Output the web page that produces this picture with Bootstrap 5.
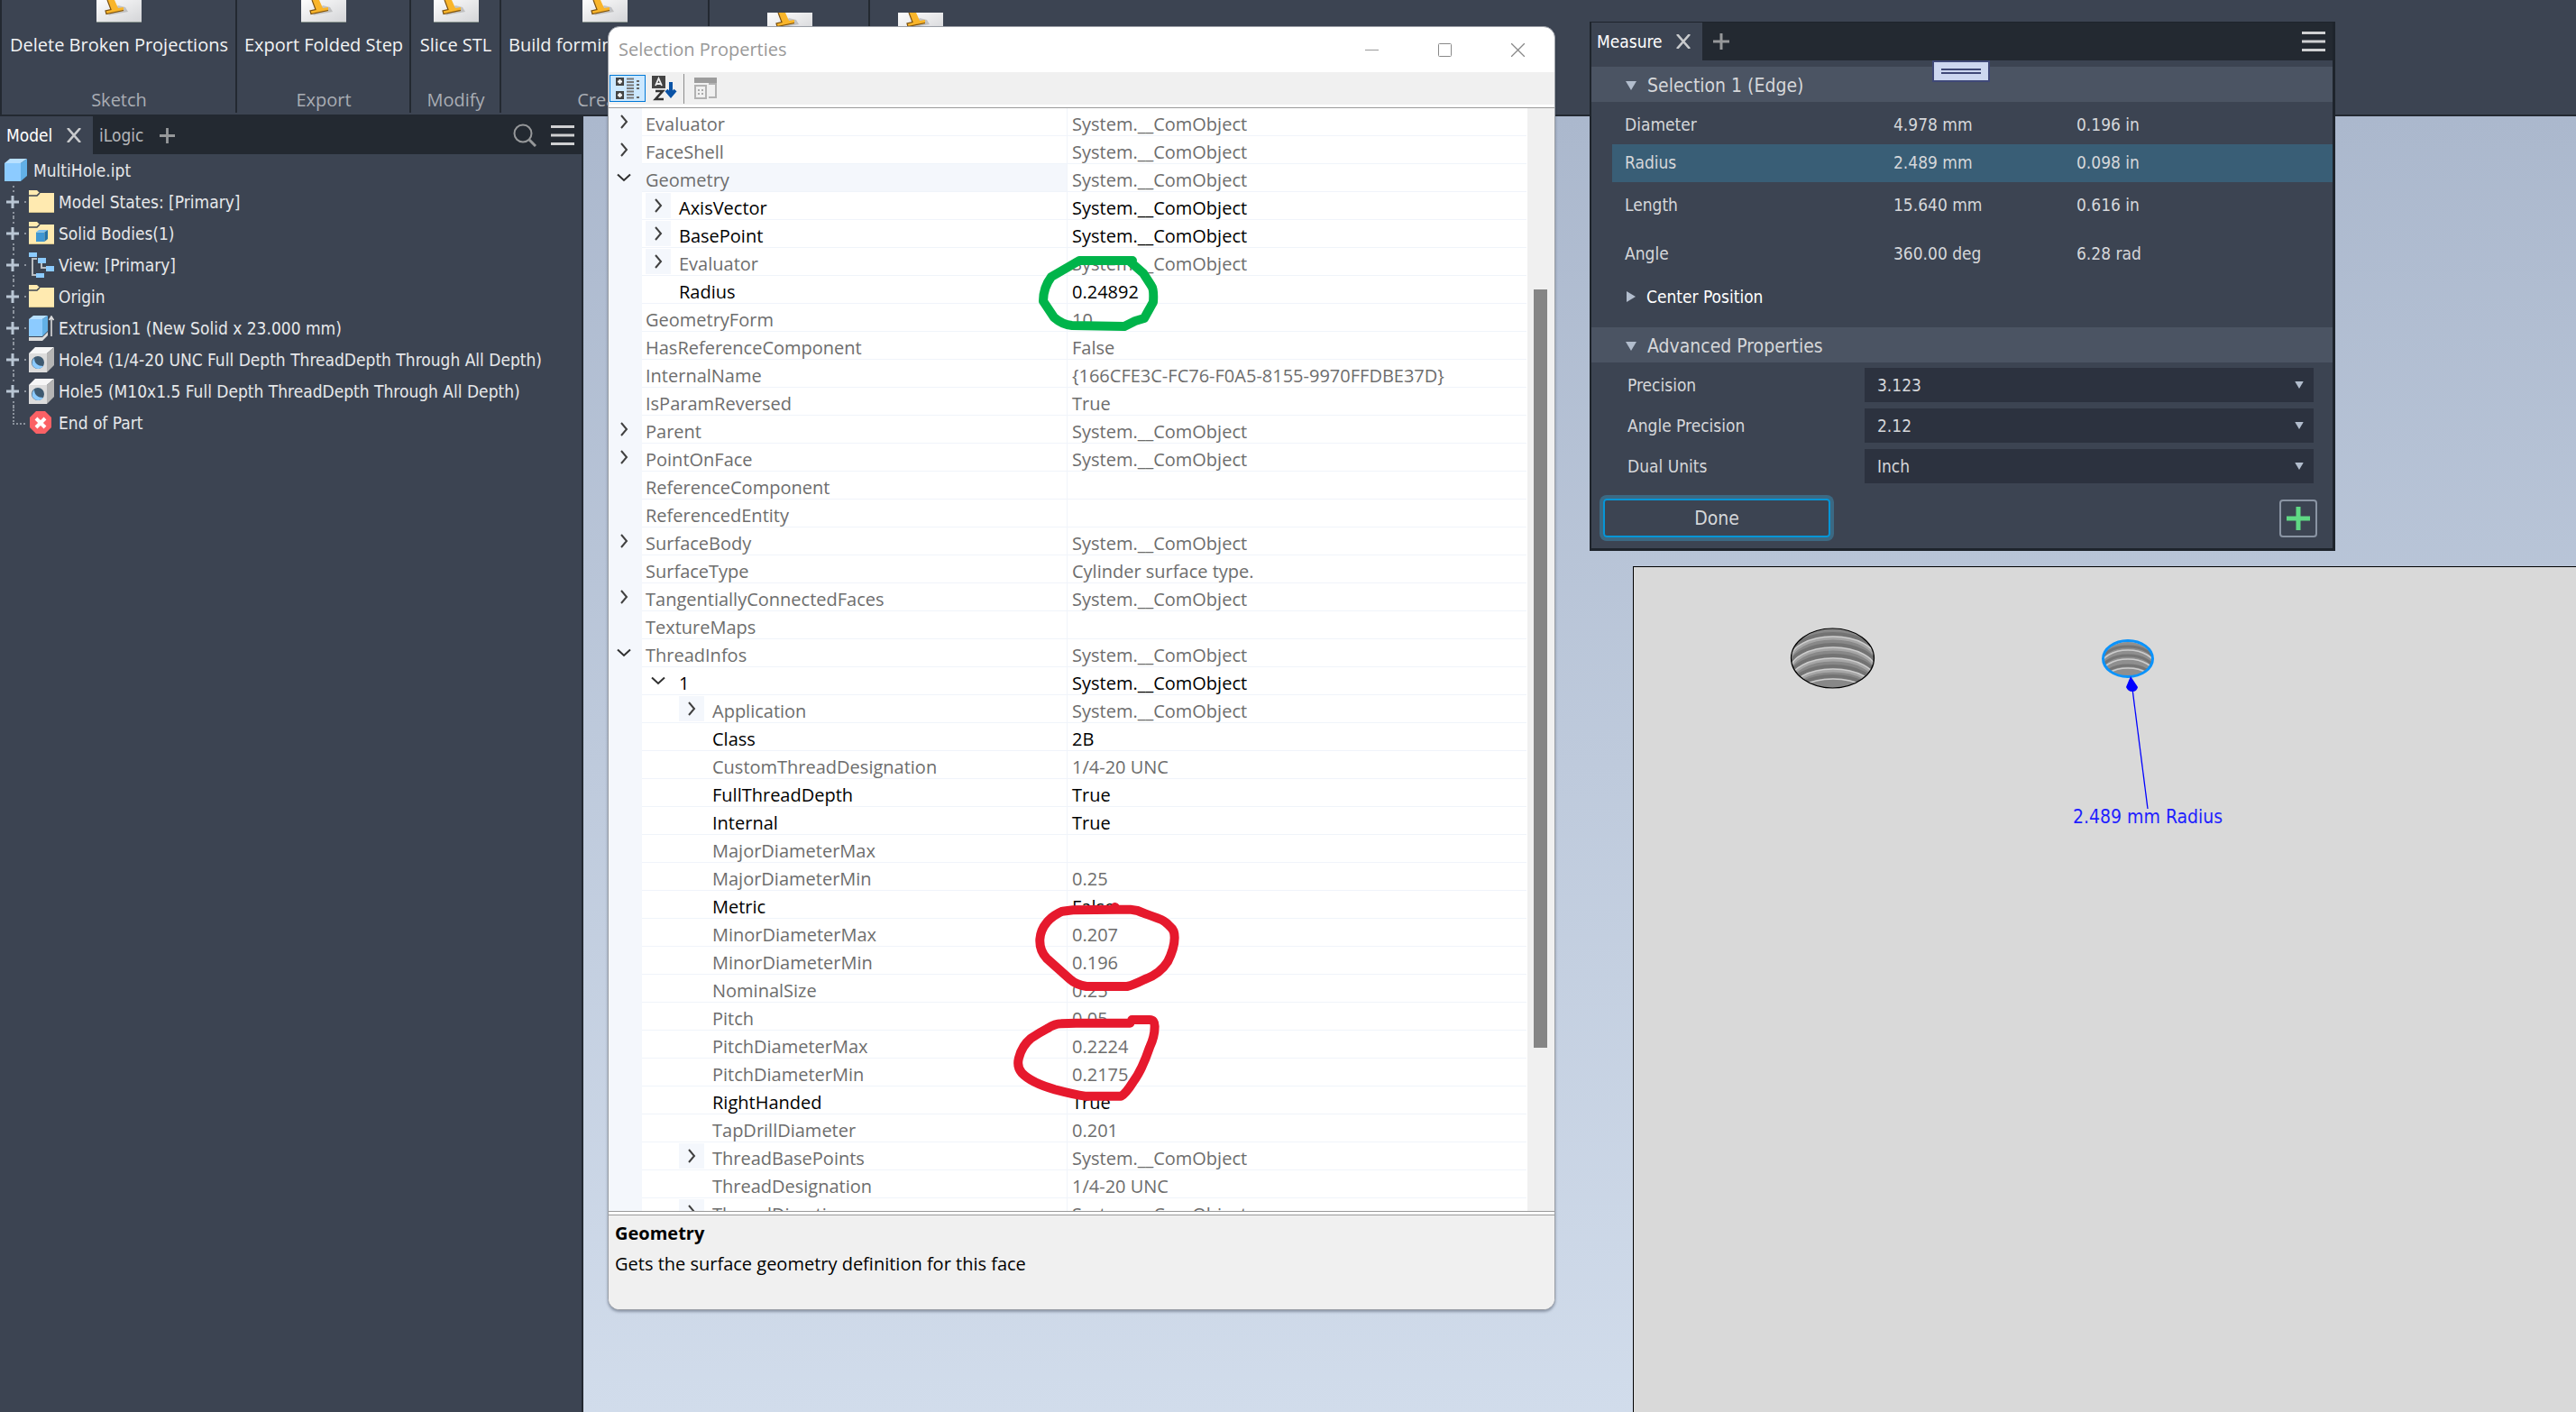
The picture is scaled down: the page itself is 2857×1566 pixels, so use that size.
<!DOCTYPE html>
<html lang="en">
<head>
<meta charset="utf-8">
<meta name="viewport" content="width=device-width, initial-scale=1">
<title>MultiHole.ipt</title>
<link href="https://cdn.jsdelivr.net/npm/bootstrap@5.3.0/dist/css/bootstrap.min.css" rel="stylesheet">
<style>
:root{--panel:#3c4452;--dark:#232931;--head:#4b5463;--ui:"DejaVu Sans Condensed","DejaVu Sans",sans-serif;--segoe:"Open Sans","Noto Sans",sans-serif}
body{font:19px/24px var(--ui);color:#e6e8ea;background:var(--panel)}
button{font:inherit;color:inherit;background:none;border:0;padding:0}
svg{display:block;flex:none}
/* ribbon */
.ribbon{background:var(--panel);height:129px;border-bottom:2px solid var(--dark);border-left:2px solid var(--dark);font:20px/28px var(--segoe);color:#f2f3f4}
.rib-group{border-right:2px solid var(--dark);height:125px;padding:0 7px 0 8px}
.rib-group.w-sketch{width:261px}
.rib-group.w-export{width:193px}
.rib-group.w-modify{width:100px}
.rib-group.wide{width:231px}
.rib-group.mid{width:178px}
.rib-group.last{border:0;width:110px}
.rib-tool{height:64px}
.rib-tool svg{margin-bottom:11px}
.rib-title{color:#a9adb4}
/* browser panel */
.browser{width:647px;background:var(--panel);border-right:2px solid var(--dark)}
.tabbar{background:var(--dark);height:42px}
.tab-on{background:var(--panel);color:#fff;height:42px}
.tab-off{color:#b4b6b9;margin-left:7px;margin-right:18px}
.browser .tab-on{width:103px;padding:0 13px 0 7px}
.tree li{height:35px;position:relative;padding-left:7px}
.tree li.root{padding-left:5px;gap:7px}
.tree li.kid::before{content:"";position:absolute;left:14px;top:0;bottom:0;border-left:2px dotted #8b929c}
.tree li.stop::before{bottom:15px;width:14px;border-bottom:2px dotted #8b929c}
.tree .plus{background:var(--panel);width:15px;padding:4px 0;position:relative}
.tree .dot{width:2px;height:2px;background:#8b929c;margin:0 3px 0 5px}
.tree .ico{width:28px;margin-right:5px}
.tree li.stop .ico{margin-left:25px}
/* canvas */
.canvas{background:linear-gradient(#abb8cd,#d1dceb)}
.plate{position:absolute;left:1164px;top:499px;right:0;bottom:0;background:#d9d9d9;border-left:1px solid #000;border-top:1px solid #000}
.plate svg{position:absolute;left:0;top:0}
.dim{position:absolute;left:487px;top:265px;font-size:21px;color:#1f1fff;white-space:nowrap}
/* properties window */
.props{position:absolute;left:674px;top:29px;width:1051px;height:1424px;background:#fff;border:1px solid #9b9fa6;border-radius:13px;overflow:hidden;font:20px/28px var(--segoe);color:#000;box-shadow:0 2px 3px rgba(40,50,70,.4)}
.props-title{height:50px;color:#999;padding:0 33px 0 11px}
.props-title .wins{gap:66px}
.props-tools{height:36px;background:#f0f0f0;padding-left:1px}
.tool-on{width:40px;height:30px;background:#cce8ff;border:1px solid #0078d7}
.tool-az{margin-left:7px}
.props-tools .rule{width:1px;height:33px;background:#8c8c8c;margin:0 11px 0 7px}
.grid-wrap{margin-top:3px;border-top:1px solid #9a9a9a;border-bottom:1px solid #9a9a9a;flex:1 1 0;min-height:0;overflow:hidden}
.grid-wrap table{border-collapse:separate;border-spacing:0;table-layout:fixed;width:1018px;flex:none;align-self:flex-start}
.c-gut{width:37px}.c-name{width:472px}
.grid-wrap td,.grid-wrap th{height:31px;padding:6px 0 0;border-bottom:1px solid #f0f4fa;white-space:nowrap;font-weight:400;line-height:24px;vertical-align:top;overflow:hidden}
.grid-wrap td.gut{background:#f4f7fc;border-color:#f4f7fc}
.grid-wrap th{border-right:1px solid #f0f4fa;padding-left:4px;color:#6d6d6d}
.grid-wrap td.val{padding-left:5px;color:#6d6d6d}
.grid-wrap tr.rw th,.grid-wrap tr.rw td.val{color:#000}
.grid-wrap tr.cur th{background:#f4f7fc}
.l1 .pad{margin-left:37px}
.l2 .pad{margin-left:74px}
.tg{display:flex;width:28px;height:28px;align-items:center;justify-content:center;margin:-5px 0 -4px}
.gut .tg{margin-left:3px}
.l1 .tg,.l2 .tg{background:#f4f7fc;margin-right:9px}
.l2 .tg{margin-left:37px}
.l1 .tg.open{background:none}
.sbar{background:#f0f0f0;width:30px;padding:201px 8px 0 7px}
.sbar div{background:#858585;height:841px}
.props-help{margin-top:3px;border-top:1px solid #9a9a9a;background:#f0f0f0;height:105px;padding:6px 7px}
.props-help p{margin:6px 0 0}
/* ink */
.ink{position:absolute;fill:none;stroke-linecap:round;stroke-linejoin:round;pointer-events:none}
.ink-a{left:1140px;top:270px}
.ink-b{left:1080px;top:960px}
/* measure window */
.measure{position:absolute;left:1763px;top:24px;width:827px;background:var(--panel);border:2px solid #1e242c;border-width:1px 3px 3px 2px;color:#d5d7da}
.measure .tab-on{width:123px;padding:0 13px 0 6px}
.grip{position:absolute;left:378px;top:42px;width:64px;height:24px;background:#cdd7f0;border:2px solid #3f4877;padding:7px 8px}
.grip span{display:block;height:6px;border:solid #3f4877;border-width:2px 0}
.sect{background:var(--head);height:39px;padding:2px 0 0 38px;font-size:21px;gap:12px}
.sect.first{margin-top:7px}
.meas{margin:3px 0 0 23px;width:799px;table-layout:fixed}
.c-lab{width:312px}.c-mm{width:203px}
.meas th,.meas td{font-weight:400;padding:0;vertical-align:middle}
.meas th{padding-left:14px}
.meas tr.r44{height:44px}.meas tr.hit{height:42px;background:#395e76}.meas tr.r50{height:50px}.meas tr.r58{height:58px}
.meas tr.hit th,.meas tr.hit td{padding-bottom:2px}
.cpos{height:53px;padding:7px 0 22px 38px;gap:11px;color:#fff}
.adv{padding:6px 21px 0 0;gap:7px}
.adv label{width:303px;padding-left:40px}
.adv .form-select{background:#2c323f none;border:0;border-radius:0;height:38px;padding:0 14px;color:#d5d7da;font:inherit}
.adv svg{position:absolute;right:11px;top:15px;pointer-events:none}
.acts{padding:17px 17px 12px 13px}
.done{width:252px;height:43px;border:2px solid #0696d7;border-radius:4px;box-shadow:0 0 0 4px rgba(59,130,165,.6);font-size:21px}
.add{width:42px;height:42px;border:2px solid #8a94a3;border-radius:4px;display:flex;align-items:center;justify-content:center}
</style>
<script src="https://cdn.jsdelivr.net/npm/bootstrap@5.3.0/dist/js/bootstrap.bundle.min.js"></script>
</head>
<body class="vh-100 d-flex flex-column overflow-hidden position-relative">
<svg class="position-absolute" width="0" height="0" aria-hidden="true">
<defs>
<linearGradient id="paper" x1="0" y1="0" x2="1" y2="1"><stop offset="0" stop-color="#fdfdfd"/><stop offset="1" stop-color="#d3d4d7"/></linearGradient>
</defs>
<symbol id="i-rule" viewBox="0 0 50 25"><path fill="url(#paper)" d="M0 0h50v25H0z"/><path d="M0 24.500h50" stroke="#8b9690"/><path d="M13 17l22-4-3-5-8-2z" fill="#777" opacity=".35"/><path d="M12 0h8l4 9 6-1v4L11 15.500 10 12l6-1.500z" fill="#f9b52a"/><path d="M12 0l4 10.500-6 1.500 1 3.500 19-4" fill="none" stroke="#7a5010" stroke-width="1.200"/></symbol>
<symbol id="i-plus" viewBox="0 0 14 14"><path d="M7 0v14M0 7h14" stroke="#b9c6d4" stroke-width="3"/></symbol>
<symbol id="i-add" viewBox="0 0 18 18"><path d="M9 0v18M0 9h18" stroke="#96989a" stroke-width="3"/></symbol>
<symbol id="i-x" viewBox="0 0 16 16"><path d="M1 0l14 16M15 0L1 16" stroke="#c9cbcd" stroke-width="2.600"/></symbol>
<symbol id="i-bars" viewBox="0 0 26 22"><path d="M0 1.500h26M0 11h26M0 20.500h26" stroke="#cfd0d2" stroke-width="3"/></symbol>
<symbol id="i-folder" viewBox="0 0 28 25"><path fill="#ffeab0" d="M0 0h9l3 3h16v22H0z"/><path d="M0 6h9l3-3" fill="none" stroke="#3c4452" stroke-width="1.500"/><path d="M0 24.500h28" stroke="#d5c48d"/></symbol>
<symbol id="i-cube" viewBox="0 0 25 25"><path fill="#8ccbff" d="M0 5h18v20H0z"/><path fill="#b8e0ff" d="M0 5l6-5h19l-7 5z"/><path fill="#62b0e6" d="M18 5l7-5v19l-7 6z"/></symbol>
<symbol id="i-hole" viewBox="0 0 28 28"><path fill="#dcdcdc" d="M0 7h20v21H0z"/><path fill="#f6f6f6" d="M0 7l7-7h21l-8 7z"/><path fill="#b5b5b5" d="M20 7l8-7v20l-8 8z"/><circle cx="10" cy="17" r="7" fill="#3f5a70"/><path fill="#8ccbff" d="M6 12c0 6 4 9 10 9-3 4-9 4-12-1-1-3 0-6 2-8z"/></symbol>
<symbol id="i-right" viewBox="0 0 10 16"><path d="M2 1l6 7-6 7" fill="none" stroke="#404040" stroke-width="2"/></symbol>
<symbol id="i-down" viewBox="0 0 16 10"><path d="M1 1.500l7 6.500 7-6.500" fill="none" stroke="#303030" stroke-width="2"/></symbol>
<symbol id="i-tri" viewBox="0 0 12 10"><path d="M0 0h12L6 10z" fill="#b2bdcd"/></symbol>
</svg>

<header class="ribbon d-flex flex-shrink-0">
  <section class="rib-group w-sketch d-flex flex-column justify-content-between align-items-center"><button class="rib-tool d-flex flex-column align-items-center text-nowrap"><svg width="50" height="25"><use href="#i-rule"/></svg>Delete Broken Projections</button><div class="rib-title">Sketch</div></section>
  <section class="rib-group w-export d-flex flex-column justify-content-between align-items-center"><button class="rib-tool d-flex flex-column align-items-center text-nowrap"><svg width="50" height="25"><use href="#i-rule"/></svg>Export Folded Step</button><div class="rib-title">Export</div></section>
  <section class="rib-group w-modify d-flex flex-column justify-content-between align-items-center"><button class="rib-tool d-flex flex-column align-items-center text-nowrap"><svg width="50" height="25"><use href="#i-rule"/></svg>Slice STL</button><div class="rib-title">Modify</div></section>
  <section class="rib-group wide d-flex flex-column justify-content-between align-items-center"><button class="rib-tool d-flex flex-column w-100 text-start"><svg class="align-self-center" width="50" height="25"><use href="#i-rule"/></svg>Build forming</button><div class="rib-title">Create</div></section>
  <section class="rib-group mid d-flex flex-column align-items-center"><button class="rib-tool" aria-label="Tool"><svg width="50" height="25"><use href="#i-rule"/></svg></button></section>
  <section class="rib-group last d-flex flex-column align-items-center"><button class="rib-tool" aria-label="Tool"><svg width="50" height="25"><use href="#i-rule"/></svg></button></section>
</header>

<div class="d-flex flex-grow-1">
<aside class="browser flex-shrink-0">
  <div class="tabbar d-flex align-items-center">
    <div class="tab-on d-flex align-items-center justify-content-between">Model<button aria-label="Close Model"><svg width="16" height="16"><use href="#i-x"/></svg></button></div>
    <a class="tab-off text-decoration-none" href="#">iLogic</a>
    <button aria-label="Add tab"><svg width="17" height="17"><use href="#i-add"/></svg></button>
    <div class="ms-auto d-flex align-items-center gap-3 me-2">
      <button aria-label="Search"><svg width="26" height="26" viewBox="0 0 26 26"><circle cx="11" cy="11" r="9.500" fill="none" stroke="#96989a" stroke-width="2"/><path d="M18 18l7 7" stroke="#96989a" stroke-width="3"/></svg></button>
      <button aria-label="Menu"><svg width="26" height="22"><use href="#i-bars"/></svg></button>
    </div>
  </div>
  <ul class="tree list-unstyled mb-0">
    <li class="root d-flex align-items-center"><svg width="25" height="25"><use href="#i-cube"/></svg>MultiHole.ipt</li>
    <li class="kid d-flex align-items-center"><button class="plus" aria-label="Expand"><svg width="14" height="14"><use href="#i-plus"/></svg></button><span class="dot"></span><span class="ico"><svg width="28" height="25"><use href="#i-folder"/></svg></span>Model States: [Primary]</li>
    <li class="kid d-flex align-items-center"><button class="plus" aria-label="Expand"><svg width="14" height="14"><use href="#i-plus"/></svg></button><span class="dot"></span><span class="ico"><svg width="28" height="25"><use href="#i-folder"/><svg x="8" y="9" width="13" height="13" viewBox="0 0 25 25"><path fill="#3f97d3" d="M0 5h18v20H0z"/><path fill="#7cc0f2" d="M0 5l6-5h19l-7 5z"/><path fill="#2573a8" d="M18 5l7-5v19l-7 6z"/></svg></svg></span>Solid Bodies(1)</li>
    <li class="kid d-flex align-items-center"><button class="plus" aria-label="Expand"><svg width="14" height="14"><use href="#i-plus"/></svg></button><span class="dot"></span><span class="ico"><svg width="28" height="28" viewBox="0 0 28 28"><path d="M9 7H4v18h5M14 12v5h5" fill="none" stroke="#b9bcc0" stroke-width="2"/><path fill="#8ccbff" d="M0 0h9v5H0zM10 6h9v6h-9zM19 15h9v6h-9zM8 23h9v5H8z"/></svg></span>View: [Primary]</li>
    <li class="kid d-flex align-items-center"><button class="plus" aria-label="Expand"><svg width="14" height="14"><use href="#i-plus"/></svg></button><span class="dot"></span><span class="ico"><svg width="28" height="25"><use href="#i-folder"/></svg></span>Origin</li>
    <li class="kid d-flex align-items-center"><button class="plus" aria-label="Expand"><svg width="14" height="14"><use href="#i-plus"/></svg></button><span class="dot"></span><span class="ico"><svg width="28" height="28" viewBox="0 0 28 28"><path fill="#ddd" d="M0 24h15l6-6v4l-6 6H0z"/><path fill="#8ccbff" d="M0 4h15v19H0z"/><path fill="#b8e0ff" d="M0 4l5-4h16l-6 4z"/><path fill="#62b0e6" d="M15 4l6-4v17l-6 6z"/><path d="M25 23V3M22.500 5L25 1l2.500 4" fill="none" stroke="#ddd" stroke-width="1.600"/></svg></span>Extrusion1 (New Solid x 23.000 mm)</li>
    <li class="kid d-flex align-items-center"><button class="plus" aria-label="Expand"><svg width="14" height="14"><use href="#i-plus"/></svg></button><span class="dot"></span><span class="ico"><svg width="28" height="28"><use href="#i-hole"/></svg></span>Hole4 (1/4-20 UNC Full Depth ThreadDepth Through All Depth)</li>
    <li class="kid d-flex align-items-center"><button class="plus" aria-label="Expand"><svg width="14" height="14"><use href="#i-plus"/></svg></button><span class="dot"></span><span class="ico"><svg width="28" height="28"><use href="#i-hole"/></svg></span>Hole5 (M10x1.5 Full Depth ThreadDepth Through All Depth)</li>
    <li class="kid stop d-flex align-items-center"><span class="ico"><svg width="26" height="26" viewBox="0 0 26 26"><path fill="#fb6165" d="M8 0h10l7 7v11l-7 7H8l-7-7V7z"/><path d="M8 8l10 10M18 8L8 18" stroke="#fff" stroke-width="4"/></svg></span>End of Part</li>
  </ul>
</aside>

<main class="canvas flex-grow-1 position-relative">
  <div class="plate">
    <svg width="700" height="300" viewBox="0 0 700 300">
      <defs><clipPath id="c1"><ellipse cx="220.500" cy="101" rx="46" ry="33"/></clipPath><clipPath id="c2"><ellipse cx="548" cy="102" rx="27" ry="19"/></clipPath></defs>
      <g clip-path="url(#c1)"><path fill="#888" d="M170 60h100v80H170z"/>
        <g fill="none" stroke="#6e6e6e" stroke-width="4" opacity=".8"><path d="M173 100A48 26 0 0 1 269 100M173 112A48 26 0 0 1 269 112M173 124A48 26 0 0 1 269 124M173 136A48 26 0 0 1 269 136M173 147A48 26 0 0 1 269 147"/></g>
        <g fill="none" stroke="#a6a6a6" stroke-width="3"><path d="M173 105A48 26 0 0 1 269 105M173 117A48 26 0 0 1 269 117M173 129A48 26 0 0 1 269 129M173 141A48 26 0 0 1 269 141"/></g>
        <g fill="none" stroke="#cdcdcd" stroke-width="1.600"><path d="M173 103A48 26 0 0 1 269 103M173 115A48 26 0 0 1 269 115M173 127A48 26 0 0 1 269 127M173 139A48 26 0 0 1 269 139M173 150A48 26 0 0 1 269 150"/></g></g>
      <ellipse cx="220.500" cy="101" rx="46" ry="33" fill="none" stroke="#000" stroke-width="1.200"/>
      <g clip-path="url(#c2)"><path fill="#8f8f8f" d="M515 75h66v55h-66z"/>
        <g fill="none" stroke="#6e6e6e" stroke-width="3" opacity=".8"><path d="M518 106A30 18 0 0 1 578 106M518 116A30 18 0 0 1 578 116M518 127A30 18 0 0 1 578 127"/></g>
        <g fill="none" stroke="#cdcdcd" stroke-width="1.600"><path d="M518 110A30 18 0 0 1 578 110M518 120A30 18 0 0 1 578 120M518 130A30 18 0 0 1 578 130"/></g></g>
      <ellipse cx="548" cy="101.500" rx="27.500" ry="20" fill="none" stroke="#0b93fb" stroke-width="3"/>
      <path d="M553 135l17 133" stroke="#00f" stroke-width="1.300"/><path fill="#00f" d="M551 121l8 12q-1 5-6 5t-7-5z"/>
    </svg>
    <div class="dim">2.489 mm Radius</div>
  </div>
</main>
</div>

<section class="props d-flex flex-column">
  <div class="props-title d-flex align-items-center justify-content-between flex-shrink-0">Selection Properties
    <div class="wins d-flex align-items-center"><button aria-label="Minimize"><svg width="15" height="16" viewBox="0 0 15 16"><path d="M0 8.500h15" stroke="#999"/></svg></button><button aria-label="Maximize"><svg width="15" height="15" viewBox="0 0 15 15"><rect x=".5" y=".5" width="14" height="14" rx="1" fill="none" stroke="#888"/></svg></button><button aria-label="Close"><svg width="15" height="15" viewBox="0 0 15 15"><path d="M0 0l15 15M15 0L0 15" stroke="#888" stroke-width="1.300"/></svg></button></div>
  </div>
  <div class="props-tools d-flex align-items-center flex-shrink-0">
    <button class="tool-on d-flex align-items-center justify-content-center" aria-label="Categorized"><svg width="26" height="24" viewBox="0 0 26 24"><path fill="#444" d="M0 0h9v9H0zM0 15h9v9H0z"/><path d="M4.500 2v5M2 4.500h5M4.500 17v5M2 19.500h5" stroke="#fff" stroke-width="2"/><path d="M12 1.500h8M12 5h8M12 8.500h8M12 12h8M12 15.500h8M12 19h8M12 22.500h8" stroke="#777" stroke-width="2"/><path d="M23 4h3M23 8h3M23 12h3M23 22h3" stroke="#666" stroke-width="2"/></svg></button>
    <button class="tool-az" aria-label="Alphabetical"><svg width="28" height="28" viewBox="0 0 28 28"><path fill="#444" d="M0 0h15v14H0z"/><path d="M4 11L7.500 3 11 11M5 9h5" fill="none" stroke="#eee" stroke-width="1.800"/><path d="M4 17h8l-8 9h9" fill="none" stroke="#333" stroke-width="2.600"/><path d="M21 7v14M16 16l5 6 5-6" fill="none" stroke="#0a53a6" stroke-width="4"/></svg></button>
    <span class="rule"></span>
    <button aria-label="Property pages" disabled><svg width="25" height="24" viewBox="0 0 25 24"><path fill="#9c9c9c" d="M0 0h25v6H0z"/><path d="M1 9h12v14H1zM16 7h8v15h-8" fill="none" stroke="#b2b2b2" stroke-width="2"/><path d="M4 14h2M8 14h2M4 18h2M8 18h2" stroke="#aaa" stroke-width="2"/></svg></button>
  </div>
  <div class="grid-wrap d-flex">
    <table>
      <colgroup><col class="c-gut"><col class="c-name"><col></colgroup>
      <tbody>
      <tr><td class="gut"><button class="tg" aria-label="Expand"><svg width="10" height="16"><use href="#i-right"/></svg></button></td><th scope="row">Evaluator</th><td class="val">System.__ComObject</td></tr>
      <tr><td class="gut"><button class="tg" aria-label="Expand"><svg width="10" height="16"><use href="#i-right"/></svg></button></td><th scope="row">FaceShell</th><td class="val">System.__ComObject</td></tr>
      <tr class="cur"><td class="gut"><button class="tg" aria-label="Collapse"><svg width="16" height="10"><use href="#i-down"/></svg></button></td><th scope="row">Geometry</th><td class="val">System.__ComObject</td></tr>
      <tr class="rw l1"><td class="gut"></td><th scope="row"><div class="d-flex"><button class="tg" aria-label="Expand"><svg width="10" height="16"><use href="#i-right"/></svg></button>AxisVector</div></th><td class="val">System.__ComObject</td></tr>
      <tr class="rw l1"><td class="gut"></td><th scope="row"><div class="d-flex"><button class="tg" aria-label="Expand"><svg width="10" height="16"><use href="#i-right"/></svg></button>BasePoint</div></th><td class="val">System.__ComObject</td></tr>
      <tr class="l1"><td class="gut"></td><th scope="row"><div class="d-flex"><button class="tg" aria-label="Expand"><svg width="10" height="16"><use href="#i-right"/></svg></button>Evaluator</div></th><td class="val">System.__ComObject</td></tr>
      <tr class="rw l1"><td class="gut"></td><th scope="row"><div class="pad">Radius</div></th><td class="val">0.24892</td></tr>
      <tr><td class="gut"></td><th scope="row">GeometryForm</th><td class="val">10</td></tr>
      <tr><td class="gut"></td><th scope="row">HasReferenceComponent</th><td class="val">False</td></tr>
      <tr><td class="gut"></td><th scope="row">InternalName</th><td class="val">{166CFE3C-FC76-F0A5-8155-9970FFDBE37D}</td></tr>
      <tr><td class="gut"></td><th scope="row">IsParamReversed</th><td class="val">True</td></tr>
      <tr><td class="gut"><button class="tg" aria-label="Expand"><svg width="10" height="16"><use href="#i-right"/></svg></button></td><th scope="row">Parent</th><td class="val">System.__ComObject</td></tr>
      <tr><td class="gut"><button class="tg" aria-label="Expand"><svg width="10" height="16"><use href="#i-right"/></svg></button></td><th scope="row">PointOnFace</th><td class="val">System.__ComObject</td></tr>
      <tr><td class="gut"></td><th scope="row">ReferenceComponent</th><td class="val"></td></tr>
      <tr><td class="gut"></td><th scope="row">ReferencedEntity</th><td class="val"></td></tr>
      <tr><td class="gut"><button class="tg" aria-label="Expand"><svg width="10" height="16"><use href="#i-right"/></svg></button></td><th scope="row">SurfaceBody</th><td class="val">System.__ComObject</td></tr>
      <tr><td class="gut"></td><th scope="row">SurfaceType</th><td class="val">Cylinder surface type.</td></tr>
      <tr><td class="gut"><button class="tg" aria-label="Expand"><svg width="10" height="16"><use href="#i-right"/></svg></button></td><th scope="row">TangentiallyConnectedFaces</th><td class="val">System.__ComObject</td></tr>
      <tr><td class="gut"></td><th scope="row">TextureMaps</th><td class="val"></td></tr>
      <tr><td class="gut"><button class="tg" aria-label="Collapse"><svg width="16" height="10"><use href="#i-down"/></svg></button></td><th scope="row">ThreadInfos</th><td class="val">System.__ComObject</td></tr>
      <tr class="rw l1"><td class="gut"></td><th scope="row"><div class="d-flex"><button class="tg open" aria-label="Collapse"><svg width="16" height="10"><use href="#i-down"/></svg></button>1</div></th><td class="val">System.__ComObject</td></tr>
      <tr class="l2"><td class="gut"></td><th scope="row"><div class="d-flex"><button class="tg" aria-label="Expand"><svg width="10" height="16"><use href="#i-right"/></svg></button>Application</div></th><td class="val">System.__ComObject</td></tr>
      <tr class="rw l2"><td class="gut"></td><th scope="row"><div class="pad">Class</div></th><td class="val">2B</td></tr>
      <tr class="l2"><td class="gut"></td><th scope="row"><div class="pad">CustomThreadDesignation</div></th><td class="val">1/4-20 UNC</td></tr>
      <tr class="rw l2"><td class="gut"></td><th scope="row"><div class="pad">FullThreadDepth</div></th><td class="val">True</td></tr>
      <tr class="rw l2"><td class="gut"></td><th scope="row"><div class="pad">Internal</div></th><td class="val">True</td></tr>
      <tr class="l2"><td class="gut"></td><th scope="row"><div class="pad">MajorDiameterMax</div></th><td class="val"></td></tr>
      <tr class="l2"><td class="gut"></td><th scope="row"><div class="pad">MajorDiameterMin</div></th><td class="val">0.25</td></tr>
      <tr class="rw l2"><td class="gut"></td><th scope="row"><div class="pad">Metric</div></th><td class="val">False</td></tr>
      <tr class="l2"><td class="gut"></td><th scope="row"><div class="pad">MinorDiameterMax</div></th><td class="val">0.207</td></tr>
      <tr class="l2"><td class="gut"></td><th scope="row"><div class="pad">MinorDiameterMin</div></th><td class="val">0.196</td></tr>
      <tr class="l2"><td class="gut"></td><th scope="row"><div class="pad">NominalSize</div></th><td class="val">0.25</td></tr>
      <tr class="l2"><td class="gut"></td><th scope="row"><div class="pad">Pitch</div></th><td class="val">0.05</td></tr>
      <tr class="l2"><td class="gut"></td><th scope="row"><div class="pad">PitchDiameterMax</div></th><td class="val">0.2224</td></tr>
      <tr class="l2"><td class="gut"></td><th scope="row"><div class="pad">PitchDiameterMin</div></th><td class="val">0.2175</td></tr>
      <tr class="rw l2"><td class="gut"></td><th scope="row"><div class="pad">RightHanded</div></th><td class="val">True</td></tr>
      <tr class="l2"><td class="gut"></td><th scope="row"><div class="pad">TapDrillDiameter</div></th><td class="val">0.201</td></tr>
      <tr class="l2"><td class="gut"></td><th scope="row"><div class="d-flex"><button class="tg" aria-label="Expand"><svg width="10" height="16"><use href="#i-right"/></svg></button>ThreadBasePoints</div></th><td class="val">System.__ComObject</td></tr>
      <tr class="l2"><td class="gut"></td><th scope="row"><div class="pad">ThreadDesignation</div></th><td class="val">1/4-20 UNC</td></tr>
      <tr class="l2"><td class="gut"></td><th scope="row"><div class="d-flex"><button class="tg" aria-label="Expand"><svg width="10" height="16"><use href="#i-right"/></svg></button>ThreadDirection</div></th><td class="val">System.__ComObject</td></tr>
      </tbody>
    </table>
    <div class="sbar ms-auto"><div></div></div>
  </div>
  <div class="props-help flex-shrink-0"><strong>Geometry</strong><p>Gets the surface geometry definition for this face</p></div>
</section>

<svg class="ink ink-a" width="160" height="110" viewBox="1140 270 160 110"><path d="M1256 291h-59l-31 18q-9 12-9 27l12 18q9 8 20 9l58 1 12-6 10-3 10-18q1-14-2-18l-9-14-16-14" transform="translate(0 -2)" stroke="#00b44a" stroke-width="10"/></svg>
<svg class="ink ink-b" width="300" height="300" viewBox="0 0 900 900"><path d="M470 138L475 146L330 148L295 152Q262 166 244 188Q222 214 220 245Q218 282 242 308L320 378Q340 396 375 402H510Q530 398 570 378Q620 360 645 320Q668 275 668 240Q668 215 655 205Q635 182 615 176Q580 164 545 150L520 146H470" stroke="#e6192d" stroke-width="30"/><path d="M526 513H585Q602 513 602 535Q602 570 585 605Q560 680 530 720Q505 760 490 767H370Q335 762 270 745Q190 722 160 690Q142 670 150 640Q160 600 190 575Q220 555 245 542Q270 526 290 526L340 524H520" stroke="#e6192d" stroke-width="30"/></svg>

<section class="measure">
  <div class="tabbar d-flex align-items-center">
    <div class="tab-on d-flex align-items-center justify-content-between">Measure<button aria-label="Close Measure"><svg width="16" height="16"><use href="#i-x"/></svg></button></div>
    <button class="ms-2 ps-1" aria-label="Add tab"><svg width="18" height="18"><use href="#i-add"/></svg></button>
    <button class="ms-auto me-2" aria-label="Menu"><svg width="26" height="22"><use href="#i-bars"/></svg></button>
  </div>
  <div class="grip"><span></span></div>
  <div class="sect first d-flex align-items-center"><svg width="12" height="10"><use href="#i-tri"/></svg>Selection 1 (Edge)</div>
  <table class="meas">
    <colgroup><col class="c-lab"><col class="c-mm"><col></colgroup>
    <tbody>
    <tr class="r44"><th scope="row">Diameter</th><td>4.978 mm</td><td>0.196 in</td></tr>
    <tr class="hit"><th scope="row">Radius</th><td>2.489 mm</td><td>0.098 in</td></tr>
    <tr class="r50"><th scope="row">Length</th><td>15.640 mm</td><td>0.616 in</td></tr>
    <tr class="r58"><th scope="row">Angle</th><td>360.00 deg</td><td>6.28 rad</td></tr>
    </tbody>
  </table>
  <div class="cpos d-flex align-items-center"><svg width="12" height="12" viewBox="0 0 12 12"><path d="M1 0v12l10-6z" fill="#b2bdcd"/></svg>Center Position</div>
  <div class="sect d-flex align-items-center"><svg width="12" height="10"><use href="#i-tri"/></svg>Advanced Properties</div>
  <form class="adv d-flex flex-column">
    <div class="d-flex align-items-center"><label for="prec">Precision</label><div class="position-relative flex-grow-1"><select id="prec" class="form-select"><option>3.123</option></select><svg width="10" height="8" viewBox="0 0 12 10"><use href="#i-tri"/></svg></div></div>
    <div class="d-flex align-items-center"><label for="aprec">Angle Precision</label><div class="position-relative flex-grow-1"><select id="aprec" class="form-select"><option>2.12</option></select><svg width="10" height="8" viewBox="0 0 12 10"><use href="#i-tri"/></svg></div></div>
    <div class="d-flex align-items-center"><label for="dual">Dual Units</label><div class="position-relative flex-grow-1"><select id="dual" class="form-select"><option>Inch</option></select><svg width="10" height="8" viewBox="0 0 12 10"><use href="#i-tri"/></svg></div></div>
  </form>
  <div class="acts d-flex justify-content-between align-items-center"><button class="done">Done</button><button class="add" aria-label="Add measurement"><svg width="26" height="26" viewBox="0 0 26 26"><path d="M13 0v26M0 13h26" stroke="#5fd984" stroke-width="5"/></svg></button></div>
</section>
</body>
</html>
